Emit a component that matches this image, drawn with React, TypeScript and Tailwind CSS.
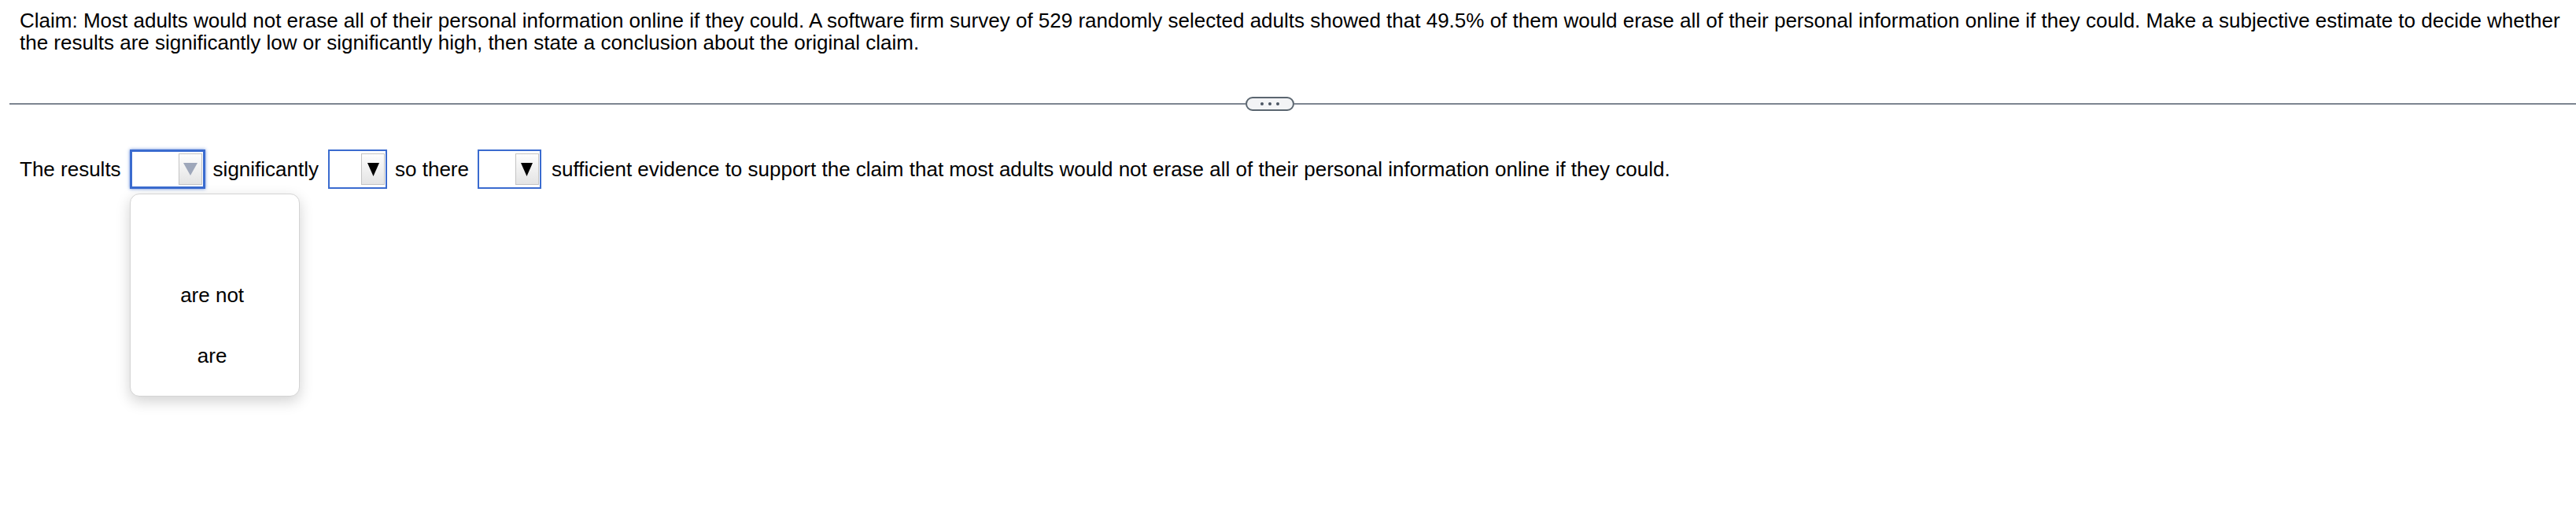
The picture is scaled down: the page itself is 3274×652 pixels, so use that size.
import React from 'react';

const Arrow: React.FC<{ muted?: boolean }> = ({ muted }) => (
  <div className="flex h-[40px] w-[30px] items-center justify-center border border-[#c4c4c4] bg-gradient-to-b from-[#fdfdfd] to-[#e4e4e4]">
    {muted ? (
      <svg width="20" height="18" viewBox="0 0 20 18">
        <polygon points="1,1 19,1 10,17" fill="#9ea7ba" />
      </svg>
    ) : (
      <svg width="15" height="17" viewBox="0 0 15 17">
        <polygon points="0,0 15,0 7.5,17" fill="#000" />
      </svg>
    )}
  </div>
);

const App: React.FC = () => {
  return (
    <div className="min-h-[652px] w-full bg-white font-['Liberation_Sans',Arial,sans-serif] text-[26px] text-black">
      <p className="pl-[25px] pr-[8px] pt-[12px] leading-[28px]">
        Claim: Most adults would not erase all of their personal information online if they could. A software firm survey of 529 randomly selected adults showed that 49.5% of them would erase all of their personal information online if they could. Make a subjective estimate to decide whether the results are significantly low or significantly high, then state a conclusion about the original claim.
      </p>

      <div className="mt-[55px] flex h-[18px] items-center pl-[12px]">
        <div className="h-[2px] w-[1571px] bg-[#7d8590]" />
        <div className="flex h-[18px] w-[62px] items-center justify-center gap-[6px] rounded-full border-2 border-[#5b6670] bg-[#f3f4f6]">
          <span className="h-[4px] w-[4px] rounded-full bg-[#4b5563]" />
          <span className="h-[4px] w-[4px] rounded-full bg-[#4b5563]" />
          <span className="h-[4px] w-[4px] rounded-full bg-[#4b5563]" />
        </div>
        <div className="h-[2px] flex-1 bg-[#7d8590]" />
      </div>

      <div className="mt-[49px] flex h-[50px] items-center pl-[25px] leading-[28px]">
        <span>The results</span>
        <div className="relative ml-[11px] flex h-[50px] w-[96px] items-center justify-end border-[3px] border-[#3a6bcf] pr-[1px] shadow-[0_0_4px_rgba(58,107,207,0.8)]">
          <Arrow muted />
          <div className="absolute left-[-3px] top-[53px] z-10 w-[216px] rounded-[12px] border border-[#d4d4d4] bg-white pb-[13px] pr-[6px] pt-[12px] shadow-[0_6px_18px_rgba(0,0,0,0.18)]">
            <div className="flex h-[77px] items-center justify-center" />
            <div className="flex h-[77px] items-center justify-center">are not</div>
            <div className="flex h-[77px] items-center justify-center">are</div>
          </div>
        </div>
        <span className="ml-[10px]">significantly</span>
        <div className="ml-[12px] flex h-[50px] w-[75px] items-center justify-end border-2 border-[#3a6bcf] pr-[1px]">
          <Arrow />
        </div>
        <span className="ml-[10px]">so there</span>
        <div className="ml-[11px] flex h-[50px] w-[81px] items-center justify-end border-2 border-[#3a6bcf] pr-[1px]">
          <Arrow />
        </div>
        <span className="ml-[13px]">
          sufficient evidence to support the claim that most adults would not erase all of their personal information online if they could.
        </span>
      </div>
    </div>
  );
};

export default App;
